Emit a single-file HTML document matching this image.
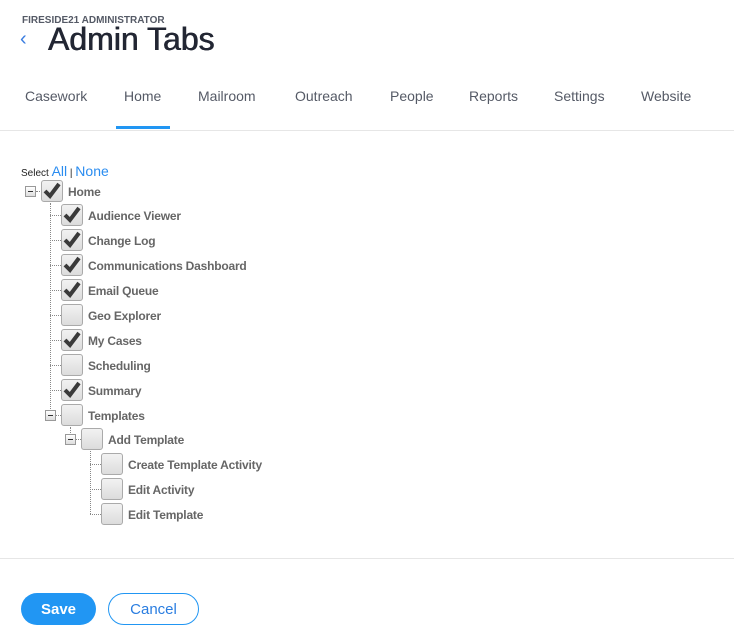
<!DOCTYPE html>
<html><head><style>
body{margin:0;width:734px;height:638px;background:#fff;font-family:"Liberation Sans",sans-serif;position:relative;overflow:hidden}
.a{position:absolute}
.tab{position:absolute;top:88px;font-size:14px;color:#555a66}
.cb{position:absolute;width:20px;height:20px;border:1px solid #aaa;border-radius:3px;background:linear-gradient(#f2f2f2,#dcdcdc)}
.lb{position:absolute;font-size:12px;font-weight:bold;color:#666;letter-spacing:-0.2px}
.ex{position:absolute;width:9px;height:9px;border:1px solid #999;background:linear-gradient(#fff,#ddd)}
.ex:after{content:"";position:absolute;left:2px;top:4px;width:5px;height:1px;background:#333}
.vl{position:absolute;border-left:1px dotted #888}
.hl{position:absolute;border-top:1px dotted #888}
</style></head><body>
<div class="a" style="left:22px;top:15px;font-size:10px;font-weight:bold;color:#555a66">FIRESIDE21 ADMINISTRATOR</div>
<div class="a" style="left:20px;top:28px;font-size:20px;color:#3a7de0">&#8249;</div>
<div class="a" style="left:48px;top:21px;font-size:32px;color:#222633;text-shadow:0.4px 0 0 #222633,-0.3px 0 0 #222633">Admin Tabs</div>
<div class="tab" style="left:25px">Casework</div>
<div class="tab" style="left:124px">Home</div>
<div class="tab" style="left:198px">Mailroom</div>
<div class="tab" style="left:295px">Outreach</div>
<div class="tab" style="left:390px">People</div>
<div class="tab" style="left:469px">Reports</div>
<div class="tab" style="left:554px">Settings</div>
<div class="tab" style="left:641px">Website</div>
<div class="a" style="left:116px;top:126px;width:54px;height:3px;background:#2196f3"></div>
<div class="a" style="left:0;top:130px;width:734px;height:1px;background:#e6e6e6"></div>
<div class="a" style="left:21px;top:163px;font-size:10px;color:#222">Select <span style="font-size:14px;color:#2a8cf0">All</span> | <span style="font-size:14px;color:#2a8cf0">None</span></div>

<div class="vl" style="left:50px;top:203px;height:212px"></div>
<div class="vl" style="left:70px;top:427px;height:12px"></div>
<div class="vl" style="left:90px;top:451px;height:63px"></div>
<div class="hl" style="left:36px;top:191px;width:6px"></div>
<div class="hl" style="left:50px;top:215px;width:11px"></div>
<div class="hl" style="left:50px;top:240px;width:11px"></div>
<div class="hl" style="left:50px;top:265px;width:11px"></div>
<div class="hl" style="left:50px;top:290px;width:11px"></div>
<div class="hl" style="left:50px;top:315px;width:11px"></div>
<div class="hl" style="left:50px;top:340px;width:11px"></div>
<div class="hl" style="left:50px;top:365px;width:11px"></div>
<div class="hl" style="left:50px;top:390px;width:11px"></div>
<div class="hl" style="left:56px;top:415px;width:5px"></div>
<div class="hl" style="left:76px;top:439px;width:5px"></div>
<div class="hl" style="left:90px;top:464px;width:11px"></div>
<div class="hl" style="left:90px;top:489px;width:11px"></div>
<div class="hl" style="left:90px;top:514px;width:11px"></div>
<div class="ex" style="left:25px;top:186px"></div>
<div class="ex" style="left:45px;top:410px"></div>
<div class="ex" style="left:65px;top:434px"></div>

<svg width="0" height="0" style="position:absolute"><defs><symbol id="ck" viewBox="0 0 20 20"><path d="M3 10 L8 15 L17 3" fill="none" stroke="#3a3a3a" stroke-width="4"/></symbol></defs></svg>

<div class="cb" style="left:41px;top:180px"><svg width="20" height="20"><use href="#ck"/></svg></div><div class="lb" style="left:68px;top:185px">Home</div>
<div class="cb" style="left:61px;top:204px"><svg width="20" height="20"><use href="#ck"/></svg></div><div class="lb" style="left:88px;top:209px">Audience Viewer</div>
<div class="cb" style="left:61px;top:229px"><svg width="20" height="20"><use href="#ck"/></svg></div><div class="lb" style="left:88px;top:234px">Change Log</div>
<div class="cb" style="left:61px;top:254px"><svg width="20" height="20"><use href="#ck"/></svg></div><div class="lb" style="left:88px;top:259px">Communications Dashboard</div>
<div class="cb" style="left:61px;top:279px"><svg width="20" height="20"><use href="#ck"/></svg></div><div class="lb" style="left:88px;top:284px">Email Queue</div>
<div class="cb" style="left:61px;top:304px"></div><div class="lb" style="left:88px;top:309px">Geo Explorer</div>
<div class="cb" style="left:61px;top:329px"><svg width="20" height="20"><use href="#ck"/></svg></div><div class="lb" style="left:88px;top:334px">My Cases</div>
<div class="cb" style="left:61px;top:354px"></div><div class="lb" style="left:88px;top:359px">Scheduling</div>
<div class="cb" style="left:61px;top:379px"><svg width="20" height="20"><use href="#ck"/></svg></div><div class="lb" style="left:88px;top:384px">Summary</div>
<div class="cb" style="left:61px;top:404px"></div><div class="lb" style="left:88px;top:409px">Templates</div>
<div class="cb" style="left:81px;top:428px"></div><div class="lb" style="left:108px;top:433px">Add Template</div>
<div class="cb" style="left:101px;top:453px"></div><div class="lb" style="left:128px;top:458px">Create Template Activity</div>
<div class="cb" style="left:101px;top:478px"></div><div class="lb" style="left:128px;top:483px">Edit Activity</div>
<div class="cb" style="left:101px;top:503px"></div><div class="lb" style="left:128px;top:508px">Edit Template</div>

<div class="a" style="left:0;top:558px;width:734px;height:1px;background:#e6e6e6"></div>
<div class="a" style="left:21px;top:593px;width:75px;height:32px;border-radius:16px;background:#2196f3;color:#fff;font-size:15px;font-weight:bold;text-align:center;line-height:33px">Save</div>
<div class="a" style="left:108px;top:593px;width:89px;height:30px;border-radius:16px;border:1px solid #2196f3;color:#2a7de0;font-size:15px;text-align:center;line-height:32px">Cancel</div>
</body></html>
